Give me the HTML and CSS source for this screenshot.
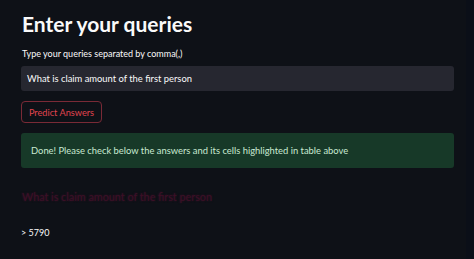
FILE: index.html
```html
<!DOCTYPE html>
<html>
<head>
<meta charset="utf-8">
<link rel="stylesheet" href="styles.css">
</head>
<body>
<div class="page">
  <main class="main">
    <h1 class="title">Enter your queries</h1>
    <label class="label">Type your queries separated by comma(,)</label>
    <div class="input">What is claim amount of the first person</div>
    <button class="btn">Predict Answers</button>
    <div class="success">Done! Please check below the answers and its cells highlighted in table above</div>
    <p class="question">What is claim amount of the first person</p>
    <p class="answer">&gt; 5790</p>
  </main>
  <div class="edge"></div>
</div>
</body>
</html>
```
FILE: styles.css
```css
html, body {
  margin: 0;
  padding: 0;
  background: #0e1117;
  height: 100%;
  overflow: hidden;
}
.page {
  display: flex;
  height: 259px;
  font-family: Lato, "Liberation Sans", sans-serif;
}
.main {
  flex: 1;
  padding: 10px 12px 0 21px;
  display: flex;
  flex-direction: column;
  align-items: flex-start;
}
.edge {
  width: 8px;
  background: #0b0f18;
}
.title {
  margin: 0;
  font-size: 21px;
  font-weight: 700;
  color: #fafafa;
  line-height: 28px;
  padding-left: 1px;
}
.label {
  margin-top: 10px;
  font-size: 9px;
  color: #fafafa;
  line-height: 12px;
  padding-left: 1px;
}
.input {
  margin-top: 6px;
  align-self: stretch;
  height: 25px;
  box-sizing: border-box;
  background: #262730;
  border-radius: 3px;
  color: #fafafa;
  font-size: 9.4px;
  line-height: 25px;
  padding-left: 6px;
}
.btn {
  margin-top: 10px;
  height: 22px;
  width: 81px;
  box-sizing: border-box;
  background: #0e1117;
  border: 1px solid #7a2a36;
  border-radius: 4px;
  color: #e0444f;
  font-family: Lato, "Liberation Sans", sans-serif;
  font-size: 9.2px;
  padding: 0;
}
.success {
  margin-top: 10px;
  align-self: stretch;
  height: 35px;
  box-sizing: border-box;
  background: #173928;
  border-radius: 3px;
  color: #c9ead2;
  font-size: 9.4px;
  line-height: 35px;
  padding-left: 10px;
}
.question {
  margin: 22px 0 0;
  padding-left: 1px;
  font-size: 10.8px;
  line-height: 14px;
  color: #3c1027;
  text-shadow: 0 0 2px #3c1027;
}
.answer {
  margin: 23px 0 0;
  font-size: 9px;
  line-height: 12px;
  color: #fafafa;
}
```
